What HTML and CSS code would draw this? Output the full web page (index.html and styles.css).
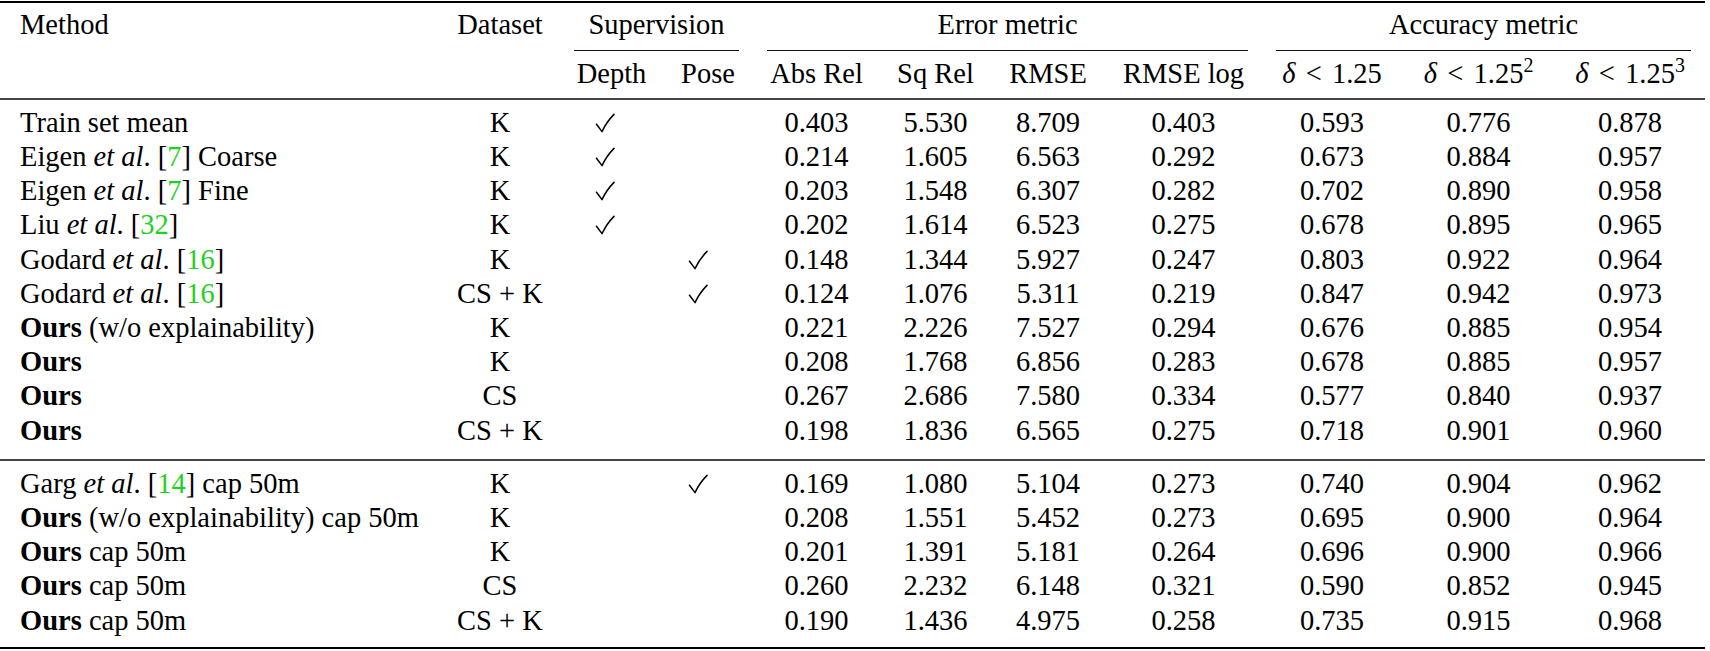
FILE: index.html
```html
<!DOCTYPE html>
<html>
<head>
<meta charset="utf-8">
<link rel="stylesheet" href="styles.css">
</head>
<body>
<table class="results">
  <colgroup>
    <col class="c-method"><col class="c-data"><col class="c-depth"><col class="c-pose">
    <col class="c-abs"><col class="c-sq"><col class="c-rmse"><col class="c-rlog">
    <col class="c-d1"><col class="c-d2"><col class="c-d3">
  </colgroup>
  <thead>
    <tr class="head-top">
      <th class="method">Method</th>
      <th>Dataset</th>
      <th colspan="2"><div class="cmid">Supervision</div></th>
      <th colspan="4"><div class="cmid">Error metric</div></th>
      <th colspan="3"><div class="cmid">Accuracy metric</div></th>
    </tr>
    <tr class="head-sub">
      <th class="method"></th>
      <th></th>
      <th>Depth</th>
      <th>Pose</th>
      <th>Abs Rel</th>
      <th>Sq Rel</th>
      <th>RMSE</th>
      <th>RMSE log</th>
      <th><span class="math"><i>δ</i><span class="rel">&lt;</span>1.25</span></th>
      <th><span class="math"><i>δ</i><span class="rel">&lt;</span>1.25<sup>2</sup></span></th>
      <th><span class="math"><i>δ</i><span class="rel">&lt;</span>1.25<sup>3</sup></span></th>
    </tr>
  </thead>
  <tbody class="sec1">
    <tr><td class="method">Train set mean</td><td>K</td><td><svg class="check check-depth" viewBox="0 0 20 20"><path d="M1.5 11.2 L7 18.6 Q11.5 9 19 1.4"/></svg></td><td></td><td>0.403</td><td>5.530</td><td>8.709</td><td>0.403</td><td>0.593</td><td>0.776</td><td>0.878</td></tr>
    <tr><td class="method">Eigen <i>et al</i>. [<span class="cite">7</span>] Coarse</td><td>K</td><td><svg class="check check-depth" viewBox="0 0 20 20"><path d="M1.5 11.2 L7 18.6 Q11.5 9 19 1.4"/></svg></td><td></td><td>0.214</td><td>1.605</td><td>6.563</td><td>0.292</td><td>0.673</td><td>0.884</td><td>0.957</td></tr>
    <tr><td class="method">Eigen <i>et al</i>. [<span class="cite">7</span>] Fine</td><td>K</td><td><svg class="check check-depth" viewBox="0 0 20 20"><path d="M1.5 11.2 L7 18.6 Q11.5 9 19 1.4"/></svg></td><td></td><td>0.203</td><td>1.548</td><td>6.307</td><td>0.282</td><td>0.702</td><td>0.890</td><td>0.958</td></tr>
    <tr><td class="method">Liu <i>et al</i>. [<span class="cite">32</span>]</td><td>K</td><td><svg class="check check-depth" viewBox="0 0 20 20"><path d="M1.5 11.2 L7 18.6 Q11.5 9 19 1.4"/></svg></td><td></td><td>0.202</td><td>1.614</td><td>6.523</td><td>0.275</td><td>0.678</td><td>0.895</td><td>0.965</td></tr>
    <tr><td class="method">Godard <i>et al</i>. [<span class="cite">16</span>]</td><td>K</td><td></td><td><svg class="check check-pose" viewBox="0 0 20 20"><path d="M1.5 11.2 L7 18.6 Q11.5 9 19 1.4"/></svg></td><td>0.148</td><td>1.344</td><td>5.927</td><td>0.247</td><td>0.803</td><td>0.922</td><td>0.964</td></tr>
    <tr><td class="method">Godard <i>et al</i>. [<span class="cite">16</span>]</td><td>CS + K</td><td></td><td><svg class="check check-pose" viewBox="0 0 20 20"><path d="M1.5 11.2 L7 18.6 Q11.5 9 19 1.4"/></svg></td><td>0.124</td><td>1.076</td><td>5.311</td><td>0.219</td><td>0.847</td><td>0.942</td><td>0.973</td></tr>
    <tr><td class="method"><b>Ours</b> (w/o explainability)</td><td>K</td><td></td><td></td><td>0.221</td><td>2.226</td><td>7.527</td><td>0.294</td><td>0.676</td><td>0.885</td><td>0.954</td></tr>
    <tr><td class="method"><b>Ours</b></td><td>K</td><td></td><td></td><td>0.208</td><td>1.768</td><td>6.856</td><td>0.283</td><td>0.678</td><td>0.885</td><td>0.957</td></tr>
    <tr><td class="method"><b>Ours</b></td><td>CS</td><td></td><td></td><td>0.267</td><td>2.686</td><td>7.580</td><td>0.334</td><td>0.577</td><td>0.840</td><td>0.937</td></tr>
    <tr><td class="method"><b>Ours</b></td><td>CS + K</td><td></td><td></td><td>0.198</td><td>1.836</td><td>6.565</td><td>0.275</td><td>0.718</td><td>0.901</td><td>0.960</td></tr>
  </tbody>
  <tbody class="sec2">
    <tr><td class="method">Garg <i>et al</i>. [<span class="cite">14</span>] cap 50m</td><td>K</td><td></td><td><svg class="check check-pose" viewBox="0 0 20 20"><path d="M1.5 11.2 L7 18.6 Q11.5 9 19 1.4"/></svg></td><td>0.169</td><td>1.080</td><td>5.104</td><td>0.273</td><td>0.740</td><td>0.904</td><td>0.962</td></tr>
    <tr><td class="method"><b>Ours</b> (w/o explainability) cap 50m</td><td>K</td><td></td><td></td><td>0.208</td><td>1.551</td><td>5.452</td><td>0.273</td><td>0.695</td><td>0.900</td><td>0.964</td></tr>
    <tr><td class="method"><b>Ours</b> cap 50m</td><td>K</td><td></td><td></td><td>0.201</td><td>1.391</td><td>5.181</td><td>0.264</td><td>0.696</td><td>0.900</td><td>0.966</td></tr>
    <tr><td class="method"><b>Ours</b> cap 50m</td><td>CS</td><td></td><td></td><td>0.260</td><td>2.232</td><td>6.148</td><td>0.321</td><td>0.590</td><td>0.852</td><td>0.945</td></tr>
    <tr><td class="method"><b>Ours</b> cap 50m</td><td>CS + K</td><td></td><td></td><td>0.190</td><td>1.436</td><td>4.975</td><td>0.258</td><td>0.735</td><td>0.915</td><td>0.968</td></tr>
  </tbody>
</table>
</body>
</html>
```

FILE: styles.css
```css
html, body {
  margin: 0;
  padding: 0;
  background: #ffffff;
}

body {
  font-family: "Liberation Serif", "Times New Roman", serif;
  font-size: 28.5px;
  color: #000;
}

.results {
  border-collapse: separate;
  border-spacing: 0;
  table-layout: fixed;
  width: 1705px;
  margin-top: 1px;
}

.c-method { width: 440px; }
.c-data { width: 120px; }
.c-depth { width: 103px; }
.c-pose { width: 90px; }
.c-abs { width: 127px; }
.c-sq { width: 111px; }
.c-rmse { width: 114px; }
.c-rlog { width: 157px; }
.c-d1 { width: 140px; }
.c-d2 { width: 153px; }
.c-d3 { width: 150px; }

.results th,
.results td {
  padding: 0;
  text-align: center;
  font-weight: normal;
  line-height: 34.2px;
  white-space: nowrap;
  vertical-align: top;
}

.results .method {
  text-align: left;
  padding-left: 20px;
}

.head-top th {
  border-top: 2px solid #000;
  padding-top: 5px;
}

.cmid {
  margin: 0 14px;
  padding-bottom: 7.8px;
  border-bottom: 1px solid #111;
}

.head-sub th {
  line-height: 30px;
  padding-top: 7.5px;
  padding-bottom: 9px;
  border-bottom: 2px solid #444;
}

.sec1 tr:first-child td { padding-top: 6.3px; }
.sec1 tr:last-child td {
  padding-bottom: 11.2px;
  border-bottom: 2px solid #444;
}

.sec2 tr:first-child td { padding-top: 5.8px; }
.sec2 tr:last-child td {
  padding-bottom: 8.7px;
  border-bottom: 2px solid #000;
}

.math i {
  font-style: italic;
}

.math .rel {
  margin: 0 0.36em;
}

.math sup {
  font-size: 0.7em;
  line-height: 0;
  vertical-align: 0.55em;
}

.cite {
  color: #1ed21e;
}

b {
  font-weight: bold;
}

.check {
  width: 20px;
  height: 20px;
  vertical-align: -1px;
  fill: none;
  stroke: #000;
  stroke-width: 1.5;
  stroke-linecap: round;
  stroke-linejoin: round;
}

.check-depth {
  margin-right: 14px;
}

.check-pose {
  margin-right: 20px;
}
```
